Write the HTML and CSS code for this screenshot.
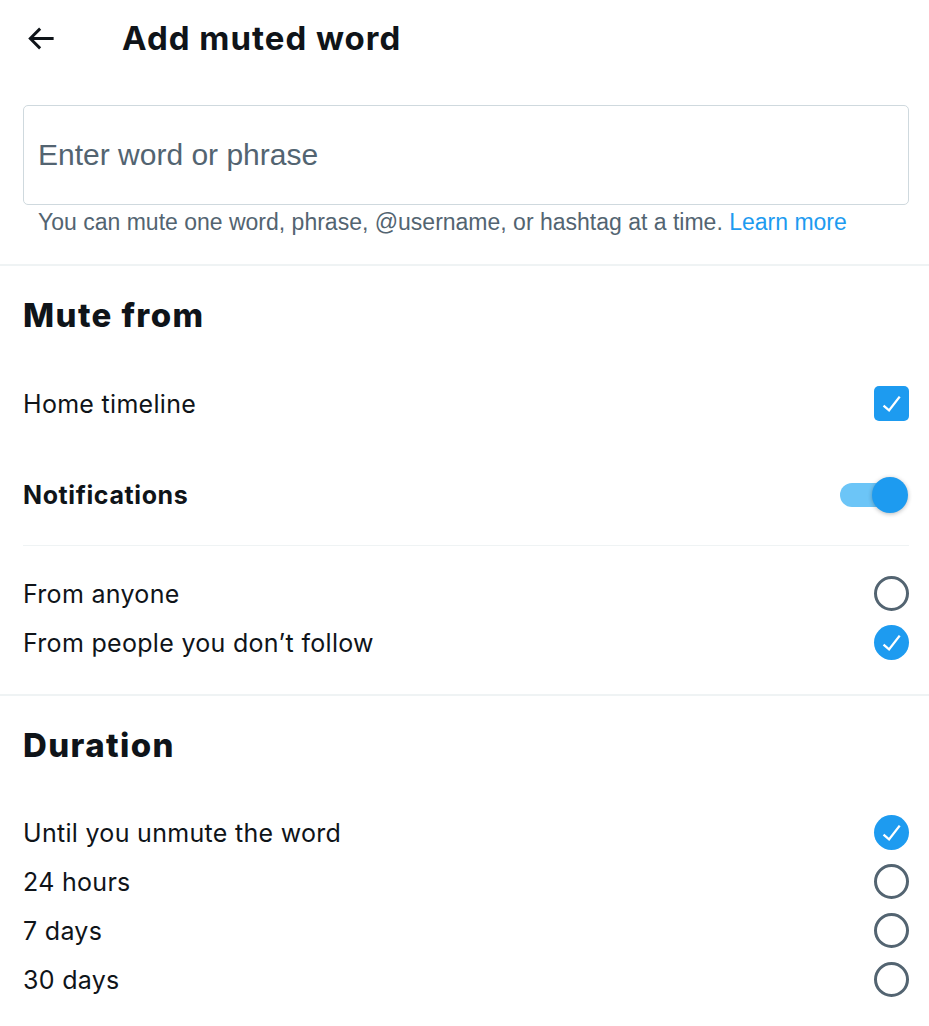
FILE: index.html
```html
<!DOCTYPE html>
<html lang="en">
<head>
<meta charset="utf-8">
<title>Add muted word</title>
<link rel="stylesheet" href="styles.css">
</head>
<body>
<div class="page">
  <header class="header">
    <button class="back" aria-label="Back">
      <svg viewBox="0 0 24 24" class="back-icon"><path d="M7.414 13l5.043 5.04-1.414 1.42L3.586 12l7.457-7.46 1.414 1.42L7.414 11H21v2H7.414z"/></svg>
    </button>
    <h1 class="title">Add muted word</h1>
  </header>

  <section class="entry">
    <label class="field">
      <input class="field-input" type="text" placeholder="Enter word or phrase">
    </label>
    <p class="hint">You can mute one word, phrase, @username, or hashtag at a time. <a class="link" href="#">Learn more</a></p>
  </section>

  <section class="group">
    <h2 class="group-title">Mute from</h2>
    <div class="big-row">
      <span class="row-label">Home timeline</span>
      <span class="checkbox checked">
        <svg viewBox="0 0 24 24"><path d="M9.64 18.952l-5.55-4.861 1.317-1.504 3.951 3.459 8.459-10.948L19.4 6.32 9.64 18.952z"/></svg>
      </span>
    </div>
    <div class="big-row">
      <span class="row-label bold">Notifications</span>
      <span class="switch"><span class="switch-track"></span><span class="switch-thumb"></span></span>
    </div>
    <div class="inner-divider"></div>
    <div class="options first">
      <div class="opt-row"><span class="row-label">From anyone</span><span class="radio"></span></div>
      <div class="opt-row"><span class="row-label">From people you don’t follow</span><span class="radio checked"><svg viewBox="0 0 24 24"><path d="M9.64 18.952l-5.55-4.861 1.317-1.504 3.951 3.459 8.459-10.948L19.4 6.32 9.64 18.952z"/></svg></span></div>
    </div>
  </section>

  <section class="group last">
    <h2 class="group-title">Duration</h2>
    <div class="options duration">
      <div class="opt-row"><span class="row-label">Until you unmute the word</span><span class="radio checked"><svg viewBox="0 0 24 24"><path d="M9.64 18.952l-5.55-4.861 1.317-1.504 3.951 3.459 8.459-10.948L19.4 6.32 9.64 18.952z"/></svg></span></div>
      <div class="opt-row"><span class="row-label">24 hours</span><span class="radio"></span></div>
      <div class="opt-row"><span class="row-label">7 days</span><span class="radio"></span></div>
      <div class="opt-row"><span class="row-label">30 days</span><span class="radio"></span></div>
    </div>
  </section>
</div>
</body>
</html>
```

FILE: styles.css
```css
* { box-sizing: border-box; }

html, body {
  margin: 0;
  padding: 0;
  background: #ffffff;
}

body {
  font-family: Inter, "Noto Sans", sans-serif;
  color: #0f1419;
}

.page {
  width: 929px;
}

.header {
  height: 76px;
  display: flex;
  align-items: center;
  padding-left: 23px;
}

.back {
  width: 35px;
  height: 35px;
  padding: 0;
  border: 0;
  background: none;
  display: flex;
  align-items: center;
  justify-content: center;
  margin-right: 64px;
}

.back-icon {
  width: 35px;
  height: 35px;
  fill: #0f1419;
}

.title {
  margin: 0;
  font-size: 33px;
  font-weight: 700;
  line-height: 40px;
  letter-spacing: 1px;
}

.entry {
  padding: 29px 20px 28px 23px;
  border-bottom: 2px solid #eff3f4;
}

.field {
  display: block;
  height: 100px;
  border: 1px solid #cfd9de;
  border-radius: 5px;
}

.field-input {
  width: 100%;
  height: 100%;
  border: 0;
  outline: none;
  background: transparent;
  padding: 0 14px;
  font-family: "Liberation Sans", Arial, sans-serif;
  font-size: 30px;
  color: #0f1419;
}

.field-input::placeholder {
  color: #536471;
}

.hint {
  margin: 3px 0 0 15px;
  font-family: "Liberation Sans", Arial, sans-serif;
  font-size: 23px;
  line-height: 28px;
  color: #536471;
}

.link {
  color: #1d9bf0;
  text-decoration: none;
}

.group {
  padding: 29px 20px 27px 23px;
  border-bottom: 2px solid #eff3f4;
}

.group.last {
  border-bottom: 0;
  padding-top: 29px;
}

.group-title {
  margin: 0;
  font-size: 33px;
  font-weight: 800;
  line-height: 40px;
  letter-spacing: 1.4px;
}

.big-row {
  height: 91px;
  display: flex;
  align-items: center;
  justify-content: space-between;
}

.group-title + .big-row {
  margin-top: 23px;
}

.row-label {
  font-size: 25px;
  line-height: 30px;
  font-weight: 400;
  letter-spacing: 0.3px;
}

.row-label.bold {
  font-weight: 700;
  letter-spacing: 0.6px;
}

.checkbox {
  width: 35px;
  height: 35px;
  border-radius: 5px;
  background: #1d9bf0;
  display: flex;
  align-items: center;
  justify-content: center;
}

.checkbox svg,
.radio svg {
  width: 28px;
  height: 28px;
  fill: #ffffff;
}

.switch {
  position: relative;
  width: 70px;
  height: 36px;
  display: block;
}

.switch-track {
  position: absolute;
  left: 1px;
  top: 6px;
  width: 62px;
  height: 24px;
  border-radius: 12px;
  background: #6cc5f7;
}

.switch-thumb {
  position: absolute;
  right: 1px;
  top: 0;
  width: 36px;
  height: 36px;
  border-radius: 50%;
  background: #1d9bf0;
  box-shadow: 0 1px 4px rgba(15, 20, 25, 0.3);
}

.inner-divider {
  height: 1px;
  background: #eff3f4;
  margin-top: 5px;
}

.options.first {
  margin-top: 23px;
}

.options.duration {
  margin-top: 43px;
}

.opt-row {
  height: 49px;
  display: flex;
  align-items: center;
  justify-content: space-between;
}

.radio {
  width: 35px;
  height: 35px;
  border-radius: 50%;
  border: 3px solid #536471;
  display: flex;
  align-items: center;
  justify-content: center;
}

.radio.checked {
  border: 0;
  background: #1d9bf0;
}
```
